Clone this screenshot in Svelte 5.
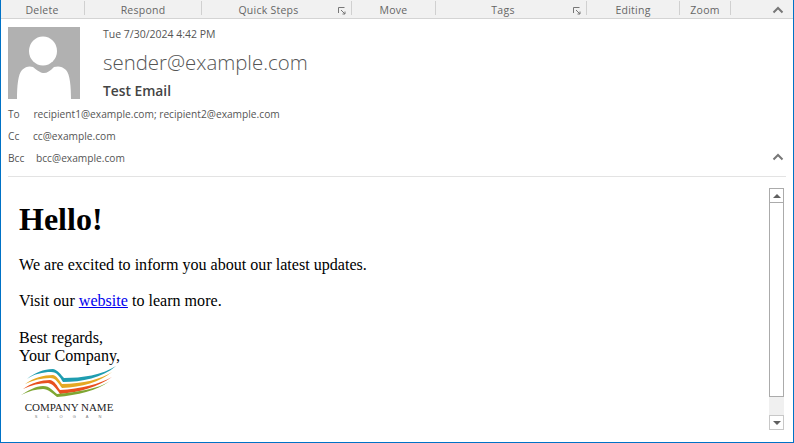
<script>
	const groups = [
		{ label: 'Delete', width: 85 },
		{ label: 'Respond', width: 117 },
		{ label: 'Quick Steps', width: 150, launcher: true },
		{ label: 'Move', width: 84 },
		{ label: 'Tags', width: 151, launcher: true },
		{ label: 'Editing', width: 93 },
		{ label: 'Zoom', width: 51 },
	];

	const recipients = [
		{ label: 'To', value: 'recipient1@example.com; recipient2@example.com', gap: 11 },
		{ label: 'Cc', value: 'cc@example.com', gap: 11 },
		{ label: 'Bcc', value: 'bcc@example.com', gap: 9 },
	];
</script>

<div class="window">
	<!-- Ribbon group labels -->
	<div class="ribbon">
		{#each groups as group}
			<div class="group" class:has-launcher={group.launcher} style="width: {group.width}px">
				<span>{group.label}</span>
				{#if group.launcher}
					<svg class="launcher" width="8" height="8" viewBox="0 0 8 8" fill="none" stroke="#777">
						<path d="M0.5 6V0.5H6.5" />
						<path d="M3 3L7 7M7 4.5V7H4.5" />
					</svg>
				{/if}
			</div>
		{/each}
		<svg class="collapse" width="12" height="8" viewBox="0 0 12 8" fill="none" stroke="#777" stroke-width="2">
			<path d="M1.5 6.5L6 2L10.5 6.5" />
		</svg>
	</div>

	<!-- Message header -->
	<header class="header">
		<div class="sender">
			<svg class="avatar" width="72" height="72" viewBox="0 0 72 72">
				<rect width="72" height="72" fill="#b1b1b1" />
				<ellipse cx="35" cy="24" rx="14" ry="14.5" fill="#fff" />
				<path d="M9 72C9 60 10 47 14 43C18 39 22 39 25 40C30 44 33 46 36 46C39 46 42 44 46 40C50 39 54 39 58 43C62 47 63 60 63 72Z" fill="#fff" />
			</svg>
			<div class="meta">
				<div class="date">Tue 7/30/2024 4:42 PM</div>
				<div class="from">sender@example.com</div>
				<div class="subject">Test Email</div>
			</div>
		</div>
		<div class="recipients">
			{#each recipients as row}
				<div class="recipient">
					<span style="margin-right: {row.gap}px">{row.label}</span>
					<span>{row.value}</span>
				</div>
			{/each}
			<svg class="header-toggle" width="12" height="8" viewBox="0 0 12 8" fill="none" stroke="#777" stroke-width="2">
				<path d="M1.5 6.5L6 2L10.5 6.5" />
			</svg>
		</div>
	</header>

	<!-- Message body -->
	<main class="body">
		<div class="content">
			<h1>Hello!</h1>
			<p>We are excited to inform you about our latest updates.</p>
			<p>Visit our <a href="#website">website</a> to learn more.</p>
			<p class="closing">Best regards,<br />Your Company,</p>
			<div class="logo">
				<svg width="96" height="32" viewBox="0 0 96 32">
					<path d="M7 14C14 8 24 4 33 4C38 5 41 10 44 13C62 13 82 10 96 1C82 13 62 17 43 17C40 12 37 7 31 7C23 7 14 9 7 14Z" fill="#1f9db0" />
					<path d="M5 19C13 13 24 10 33 10C37 11 39 15 42 19C62 19 82 14 92 7C80 17 62 22 42 23C38 18 36 13 30 13C22 13 13 15 5 19Z" fill="#e5a823" />
					<path d="M3 24C11 18 22 15 30 15C35 16 37 21 40 25C60 24 80 19 92 12C78 22 60 27 40 29C36 23 33 19 28 18C20 18 11 20 3 24Z" fill="#e8501f" />
					<path d="M1 30C9 25 16 21 23 21C30 21 33 26 37 29C58 27 78 24 90 16C76 26 58 30 37 32C32 28 28 24 23 24C16 24 9 26 1 30Z" fill="#7fa632" />
				</svg>
				<div class="logo-name">COMPANY NAME</div>
				<div class="logo-slogan">SLOGAN</div>
			</div>
		</div>
		<div class="scrollbar">
			<div class="arrow up"><span></span></div>
			<div class="thumb"></div>
			<div class="arrow down"><span></span></div>
		</div>
	</main>
</div>

<style>
	:global(body) {
		margin: 0;
		background: #fff;
	}

	.window {
		box-sizing: border-box;
		width: 794px;
		height: 443px;
		display: flex;
		flex-direction: column;
		border: solid #0072c6;
		border-width: 0 1px 1px;
		overflow: hidden;
		font-family: "Open Sans", "Noto Sans", sans-serif;
		color: #444;
	}

	/* Ribbon */
	.ribbon {
		position: relative;
		flex: none;
		display: flex;
		height: 18px;
		background: #f1f1f1;
		border-bottom: 1px solid #d4d4d4;
		font-size: 10.5px;
		color: #666;
	}

	.group {
		position: relative;
		box-sizing: border-box;
		display: flex;
		align-items: center;
		justify-content: center;
		height: 14px;
		margin-top: 1px;
		padding-top: 3px;
		border-right: 1px solid #d0d0d0;
		letter-spacing: 0.25px;
	}

	.group:first-child {
		margin-left: -1px;
	}

	.has-launcher {
		padding-right: 16px;
	}

	.launcher {
		position: absolute;
		right: 5px;
		top: 6px;
	}

	.collapse {
		position: absolute;
		right: 9px;
		top: 6px;
	}

	/* Header */
	.header {
		flex: none;
		margin: 0 7px;
		height: 158px;
		box-sizing: border-box;
		padding-top: 8px;
		border-bottom: 1px solid #e3e3e3;
	}

	.sender {
		display: flex;
		height: 72px;
	}

	.avatar {
		flex: none;
		margin-right: 23px;
	}

	.meta {
		min-width: 0;
	}

	.date {
		font-size: 10.5px;
		line-height: 14px;
		color: #555;
	}

	.from {
		margin-top: 7px;
		font-size: 20.4px;
		font-weight: 300;
		line-height: 28px;
		color: #555;
	}

	.subject {
		margin-top: 6px;
		font-size: 13.8px;
		font-weight: 600;
		line-height: 18px;
		color: #444;
	}

	.recipients {
		position: relative;
		margin-top: 5px;
	}

	.recipient {
		height: 22px;
		font-size: 10.2px;
		line-height: 20px;
		color: #555;
		white-space: nowrap;
	}

	.header-toggle {
		position: absolute;
		right: 2px;
		top: 49px;
	}

	/* Body */
	.body {
		flex: 1;
		min-height: 0;
		display: flex;
		justify-content: space-between;
		padding: 11px 9px 11px 18px;
	}

	.content {
		font-family: "Liberation Serif", "Times New Roman", serif;
		font-size: 16.08px;
		line-height: 18px;
		color: #000;
	}

	h1 {
		margin: 13px 0 0;
		font-size: 32px;
		line-height: 37px;
	}

	p {
		margin: 18px 0 0;
	}

	.closing {
		margin-top: 19px;
	}

	a {
		color: #0000ee;
	}

	.logo {
		width: 96px;
		margin-left: 1px;
		text-align: center;
	}

	.logo svg {
		display: block;
	}

	.logo-name {
		margin-top: 4px;
		margin-left: 2px;
		font-size: 11px;
		line-height: 12px;
		color: #222;
		white-space: nowrap;
	}

	.logo-slogan {
		font-family: "Liberation Sans", sans-serif;
		font-size: 4px;
		line-height: 8px;
		letter-spacing: 10px;
		margin-left: 10px;
		color: #777;
		white-space: nowrap;
	}

	/* Scrollbar */
	.scrollbar {
		flex: none;
		width: 15px;
		display: flex;
		flex-direction: column;
		background: #f0f0f0;
		height: 242px;
	}

	.arrow {
		flex: none;
		box-sizing: border-box;
		display: flex;
		align-items: center;
		justify-content: center;
		height: 15px;
		background: #fff;
		border: 1px solid #ababab;
	}

	.arrow span {
		width: 0;
		height: 0;
		border: 4px solid transparent;
	}

	.up span {
		border-top-width: 0;
		border-bottom-color: #606060;
	}

	.down span {
		border-bottom-width: 0;
		border-top-color: #606060;
	}

	.thumb {
		box-sizing: border-box;
		height: 195px;
		background: #fff;
		border: 1px solid #ababab;
		margin-top: -1px;
	}

	.down {
		margin-top: auto;
		border-color: #c8c8c8;
	}
</style>
